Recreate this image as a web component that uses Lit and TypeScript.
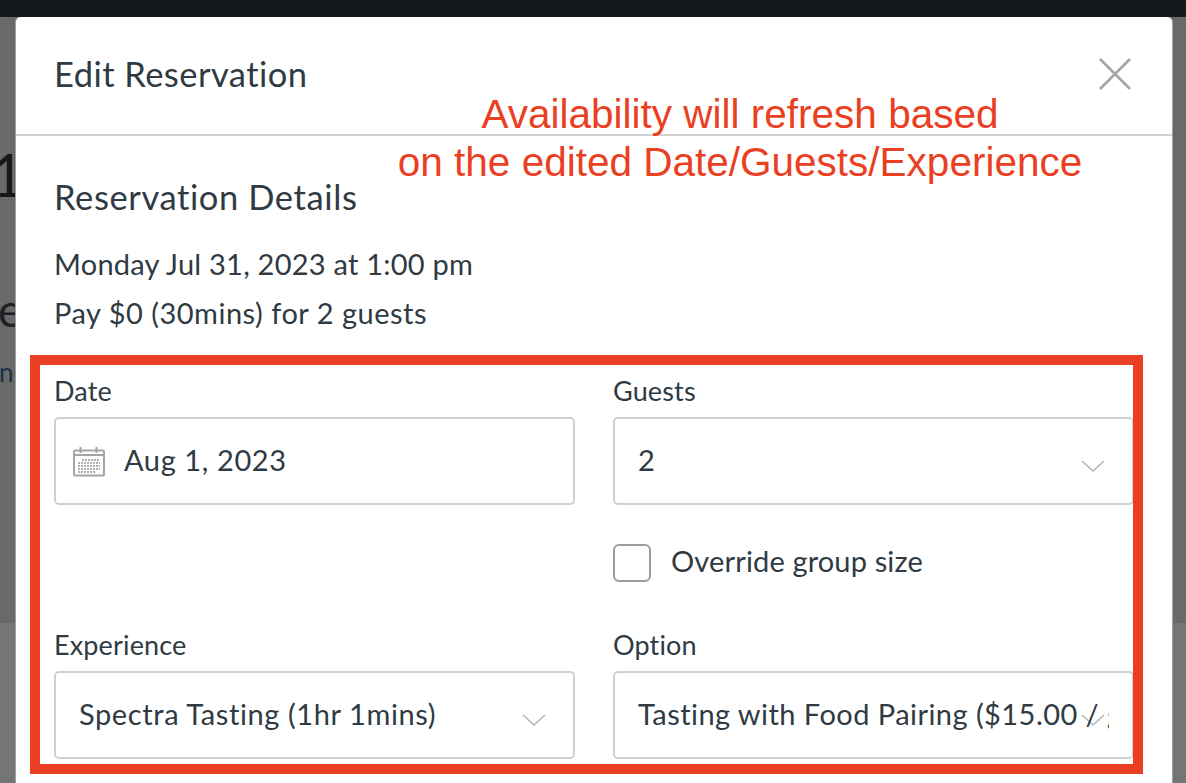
import { css, html, LitElement } from "lit";
import { customElement } from "lit/decorators.js";

@customElement("app-root")
class AppRoot extends LitElement {
    render() {
        return html`
      <div class="topbar"></div>
      <div class="stage">
        <div class="behind">
          <span class="behind-big">1</span>
          <span class="behind-mid">e</span>
          <span class="behind-link">ne</span>
          <div class="behind-low"></div>
        </div>
        <div class="modal">
          <div class="modal-head">
            <h2>Edit Reservation</h2>
            <svg class="close" viewBox="0 0 32 32">
              <path d="M1 1L31 31M31 1L1 31" />
            </svg>
          </div>
          <div class="modal-body">
            <h3>Reservation Details</h3>
            <p class="line">Monday Jul 31, 2023 at 1:00 pm</p>
            <p class="line">Pay $0 (30mins) for 2 guests</p>
            <div class="form">
              <div class="field">
                <label>Date</label>
                <div class="input">
                  <svg class="cal" viewBox="0 0 32 31">
                    <path class="cal-frame" d="M2 4.5h28a1 1 0 0 1 1 1v23a1 1 0 0 1-1 1H2a1 1 0 0 1-1-1v-23a1 1 0 0 1 1-1zM1 9h30M7.5 1v6M23.5 1v6" />
                    <path class="cal-dots" d="M9 14h18M5 17h22M5 20h22M5 23h22M5 26h18" />
                  </svg>
                  <span>Aug 1, 2023</span>
                </div>
              </div>
              <div class="field">
                <label>Guests</label>
                <div class="input select">
                  <span>2</span>
                  <svg class="chev" viewBox="0 0 24 12"><path d="M1 1l11 10L23 1" /></svg>
                </div>
                <div class="check">
                  <span class="box"></span>
                  <span class="check-text">Override group size</span>
                </div>
              </div>
              <div class="field">
                <label>Experience</label>
                <div class="input select">
                  <span>Spectra Tasting (1hr 1mins)</span>
                  <svg class="chev" viewBox="0 0 24 12"><path d="M1 1l11 10L23 1" /></svg>
                </div>
              </div>
              <div class="field">
                <label>Option</label>
                <div class="input select option">
                  <span class="clip">Tasting with Food Pairing ($15.00 / guest)</span>
                  <svg class="chev" viewBox="0 0 24 12"><path d="M1 1l11 10L23 1" /></svg>
                </div>
              </div>
            </div>
          </div>
        </div>
        <div class="note">Availability will refresh based<br />on the edited Date/Guests/Experience</div>
        <div class="redbox"></div>
      </div>
    `;
    }

    static styles = css`
    :host {
        display: block;
        width: 1186px;
        height: 783px;
        overflow: hidden;
        font-family: "Lato", "Noto Sans", sans-serif;
        color: #2f3a43;
    }

    .topbar {
        height: 17px;
        background: #14191c;
    }

    .stage {
        position: relative;
        height: 766px;
        overflow: hidden;
        background: #696969;
    }

    .behind {
        position: absolute;
        inset: 0;
    }

    .behind-big {
        position: absolute;
        left: -10px;
        top: 127px;
        font-size: 60px;
        line-height: 60px;
        color: #17191b;
    }

    .behind-mid {
        position: absolute;
        left: -2px;
        top: 268px;
        font-size: 46px;
        line-height: 50px;
        color: #1d2024;
    }

    .behind-link {
        position: absolute;
        left: -1px;
        top: 341px;
        font-size: 26px;
        line-height: 28px;
        color: #16304a;
    }

    .behind-low {
        position: absolute;
        left: 0;
        right: 0;
        top: 606px;
        bottom: 0;
        background: #757575;
    }

    .modal {
        position: relative;
        width: 1156px;
        margin-left: 16px;
        height: 800px;
        background: #fff;
        border-radius: 5px 5px 0 0;
        box-shadow: 1px 0 0 #a0a0a0, -1px 0 0 #a0a0a0;
    }

    .modal-head {
        height: 119px;
        box-sizing: border-box;
        border-bottom: 2px solid #d3d3d3;
        padding: 0 41px 0 38px;
        display: flex;
        align-items: center;
        justify-content: space-between;
    }

    h2 {
        margin: 0 0 4px;
        font-size: 34.5px;
        letter-spacing: 0.45px;
        font-weight: 400;
    }

    .close {
        width: 32px;
        height: 32px;
        margin-bottom: 4px;
        stroke: #a3a5a7;
        stroke-width: 2.6;
        fill: none;
    }

    .modal-body {
        padding: 39px 38px 0;
    }

    h3 {
        margin: 0;
        font-size: 34.5px;
        letter-spacing: 0.6px;
        line-height: 44px;
        font-weight: 400;
    }

    .line {
        margin: 0;
        font-size: 29px;
        letter-spacing: 0.5px;
        line-height: 49px;
    }

    h3 + .line {
        margin-top: 20px;
        letter-spacing: 0.23px;
    }

    .form {
        margin-top: 37px;
        display: grid;
        grid-template-columns: 521px 521px;
        column-gap: 38px;
        row-gap: 46px;
    }

    label {
        display: block;
        font-size: 27px;
        letter-spacing: 0.15px;
        line-height: 34px;
        margin-bottom: 9px;
    }

    .input {
        box-sizing: border-box;
        height: 88px;
        border: 2px solid #d0d0d0;
        border-radius: 5px;
        display: flex;
        align-items: center;
        padding: 0 18px 4px 17px;
        font-size: 29px;
        letter-spacing: 0.6px;
        background: #fff;
        position: relative;
    }

    .select {
        padding-left: 23px;
    }

    .cal {
        width: 32px;
        height: 31px;
        margin-right: 19px;
        margin-top: 4px;
        fill: none;
    }

    .cal-frame {
        stroke: #a2a4a6;
        stroke-width: 2;
    }

    .cal-dots {
        stroke: #aeb0b2;
        stroke-width: 2;
        stroke-dasharray: 2 1;
    }

    .chev {
        position: absolute;
        right: 27px;
        top: 41px;
        width: 24px;
        height: 12px;
        fill: none;
        stroke: #b4b6b8;
        stroke-width: 1.6;
    }

    .check {
        display: flex;
        align-items: center;
        gap: 20px;
        margin-top: 39px;
        font-size: 29px;
        letter-spacing: 0.15px;
        height: 38px;
    }

    .check-text {
        padding-bottom: 5px;
    }

    .box {
        box-sizing: border-box;
        width: 38px;
        height: 38px;
        border: 2px solid #9a9ea2;
        border-radius: 6px;
    }

    .clip {
        display: block;
        width: 471px;
        overflow: hidden;
        white-space: nowrap;
        letter-spacing: 0.45px;
        position: relative;
        z-index: 1;
    }

    .note {
        position: absolute;
        left: 280px;
        width: 920px;
        top: 73px;
        text-align: center;
        font-family: "Liberation Sans", Arial, sans-serif;
        font-size: 40.5px;
        line-height: 48px;
        color: #ea3f23;
    }

    .redbox {
        position: absolute;
        left: 30px;
        top: 338px;
        width: 1113px;
        height: 419px;
        box-sizing: border-box;
        border: 10px solid #ea3f23;
    }
  `;
}
